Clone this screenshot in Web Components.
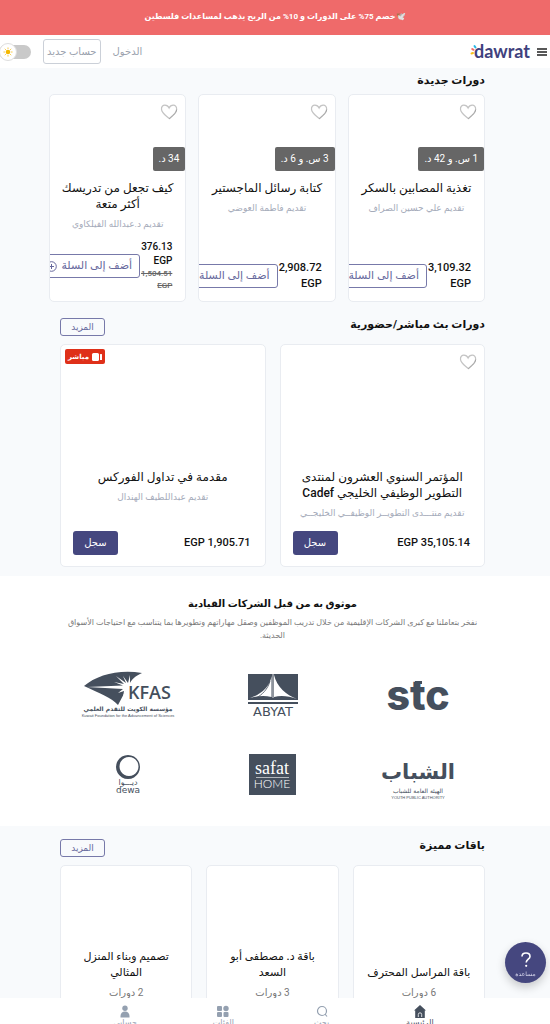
<!DOCTYPE html>
<html lang="ar" dir="rtl">
<head>
<meta charset="utf-8">
<meta name="viewport" content="width=device-width, initial-scale=1">
<title>dawrat</title>
<style>
  body {
    margin: 0;
    font-family: Roboto, "DejaVu Sans", sans-serif;
    font-size: 12px;
    line-height: 16px;
    color: #111;
    --brand: #45477f;
    --line: #e9ecf1;
    --slate: #454f5d;
    --muted: #a5abba;
  }
</style>
</head>
<body>
<dawrat-app></dawrat-app>

<script>
// small base class, every element just gives its template
class Base extends HTMLElement {
  constructor() {
    super();
    this.attachShadow({ mode: 'open' });
  }
  connectedCallback() {
    this.shadowRoot.innerHTML = `
      <style>
        :host { display: block; box-sizing: border-box; }
        *, *::before { box-sizing: border-box; }
        button { font: inherit; cursor: pointer; margin: 0; }
        a { color: inherit; text-decoration: none; }
        h2, h3, p { margin: 0; font-weight: inherit; font-size: inherit; }
        svg { display: block; flex: none; overflow: visible; }
      </style>${this.template()}`;
  }
}

// ---------- top ----------

class PromoBanner extends Base {
  template() {
    return `
    <style>
      :host { background: #ef6a6a; color: #fff; text-align: center; font-size: 8px; font-weight: 700; padding: 9px 12px 10px; }
    </style>
    <slot></slot>`;
  }
}
customElements.define('promo-banner', PromoBanner);

class ThemeSwitch extends Base {
  template() {
    return `
    <style>
      label { display: flex; align-items: center; width: 32px; height: 14px; border-radius: 7px; background: #c9c9c9; direction: ltr; }
      input { appearance: none; margin: 0; width: 0; height: 0; }
      .knob { display: grid; place-items: center; flex: none; width: 18px; height: 18px; border-radius: 50%; background: #fff; border: 1px solid #ddd; }
    </style>
    <label aria-label="الوضع الليلي">
      <input type="checkbox">
      <span class="knob">
        <svg width="10" height="10" viewBox="0 0 10 10"><circle cx="5" cy="5" r="2.3" fill="#f5b800"/><path d="M5 .5v1.4M5 8.1v1.4M.5 5h1.4M8.1 5h1.4M1.8 1.8l1 1M7.2 7.2l1 1M8.2 1.8l-1 1M2.8 7.2l-1 1" stroke="#f5b800" stroke-width=".8"/></svg>
      </span>
    </label>`;
  }
}
customElements.define('theme-switch', ThemeSwitch);

class DawratLogo extends Base {
  template() {
    return `
    <svg width="60" height="18" viewBox="0 0 60 18" direction="ltr" role="img" aria-label="dawrat">
      <path d="M4.500 3L5.500 4.500" stroke="#27b7e8" stroke-width="2" stroke-linecap="round"/>
      <path d="M2.200 6L3.500 6.800" stroke="#ef6a6a" stroke-width="2" stroke-linecap="round"/>
      <path d="M1.500 10.500L3 10" stroke="#f8c21c" stroke-width="2" stroke-linecap="round"/>
      <text x="4" y="15" font-family="Lato, sans-serif" font-size="18" font-weight="700" fill="#3f417d">dawrat</text>
    </svg>`;
  }
}
customElements.define('dawrat-logo', DawratLogo);

class SiteHeader extends Base {
  template() {
    return `
    <style>
      :host { display: flex; align-items: center; height: 33px; background: #fff; padding-right: 2px; color: #9aa1ad; font-size: 10px; }
      .menu { border: 0; background: none; padding: 0; margin-left: 6px; }
      nav { display: flex; align-items: center; gap: 12px; margin-right: auto; }
      .join { border: 1px solid #cbd0d8; border-radius: 3px; background: #fff; color: inherit; padding: 0 3px; height: 25px; }
      theme-switch { margin-left: -1px; }
    </style>
    <button class="menu" aria-label="القائمة"><svg width="12" height="10" viewBox="0 0 12 10"><path d="M1 2h10M1 5h10M1 8h10" stroke="#222" stroke-width="1.300"/></svg></button>
    <dawrat-logo></dawrat-logo>
    <nav>
      <a href="#login">الدخول</a>
      <button class="join">حساب جديد</button>
      <theme-switch></theme-switch>
    </nav>`;
  }
}
customElements.define('site-header', SiteHeader);

// ---------- sections ----------

class PageSection extends Base {
  template() {
    const more = this.hasAttribute('more') ? '<button>المزيد</button>' : '';
    return `
    <style>
      :host { padding: 0 65px 0 60px; }
      :host([wide]) { padding-left: 49px; }
      header { display: flex; align-items: center; justify-content: space-between; height: 26px; }
      :host([more]) header { align-items: flex-start; }
      h2 { font-size: 11px; font-weight: 700; line-height: 14px; }
      button { width: 45px; height: 18px; padding: 0; border: 1px solid #7779a9; border-radius: 3px; background: none; color: #66689c; font-size: 9px; line-height: 14px; }
      .grid { display: grid; grid-template-columns: repeat(var(--cols, 3), minmax(0, 1fr)); gap: var(--gap, 14px); }
    </style>
    <header><h2>${this.getAttribute('heading')}</h2>${more}</header>
    <div class="grid"><slot></slot></div>`;
  }
}
customElements.define('page-section', PageSection);

class HeartButton extends Base {
  template() {
    return `
    <style>button { border: 0; background: none; padding: 0; }</style>
    <button aria-label="المفضلة">
      <svg width="18" height="18" viewBox="0 0 18 18"><path d="M9.300 15.700C7 13.200 1.900 10.800 1.500 6.400 1.200 3.600 2.900 2.200 4.900 2.200c2 0 3.400 1.100 4.200 2.900C9.900 3.300 11.300 2.200 13.200 2.200c2.200 0 3.700 1.500 3.400 4.200-.4 4.400-5.100 6.800-7.300 9.300z" fill="#fff" stroke="#c4c4c4" stroke-width="1.200"/><path d="M9.300 15.900c2.200-2.500 7-5 7.400-9.300" fill="none" stroke="#999" stroke-width=".8"/></svg>
    </button>`;
  }
}
customElements.define('heart-button', HeartButton);

const cardCss = `
  :host { position: relative; display: flex; flex-direction: column; background: #fff; border: 1px solid var(--line); border-radius: 5px; overflow: hidden; }
  h3 { font-weight: 500; text-align: center; }
  .by { color: var(--muted); font-size: 9px; text-align: center; }
  heart-button { position: absolute; top: 8px; right: 7px; }
  .row { display: flex; align-items: center; margin-top: auto; }
  .price { font-size: 11px; font-weight: 500; }
`;

class CourseCard extends Base {
  template() {
    const old = this.getAttribute('old');
    return `
    <style>
      ${cardCss}
      .cover { display: flex; align-items: flex-end; height: 76px; margin-bottom: 9px; }
      .time { background: #666; color: #fff; font-size: 10px; line-height: 24px; padding: 0 6px; border-radius: 2px; }
      h3 { padding: 0 8px; }
      .by { margin-top: 4px; }
      .row { padding: 8px 13px 9px; }
      .sale { font-size: 10px; line-height: 14px; }
      del { display: block; color: #666; font-size: 8px; line-height: 12px; }
      .add { display: flex; align-items: center; gap: 4px; flex: none; height: 24px; padding: 0 7px; margin-right: 1px; border: 1px solid #7779a9; border-radius: 3px; background: #fff; color: #66689c; font-size: 11px; }
    </style>
    <div class="cover"><span class="time">${this.getAttribute('time')}</span></div>
    <heart-button></heart-button>
    <h3><slot></slot></h3>
    <p class="by">${this.getAttribute('by')}</p>
    <div class="row">
      <div class="price ${old ? 'sale' : ''}">${this.getAttribute('price')}${old ? `<del>${old}</del>` : ''}</div>
      <button class="add">أضف إلى السلة
        <svg width="11" height="11" viewBox="0 0 11 11"><circle cx="5.500" cy="5.500" r="4.800" fill="none" stroke="#66689c"/><path d="M5.500 3v5M3 5.500h5" stroke="#66689c"/></svg>
      </button>
    </div>`;
  }
}
customElements.define('course-card', CourseCard);

class LiveCard extends Base {
  template() {
    const top = this.hasAttribute('live')
      ? `<span class="live"><svg width="10" height="8" viewBox="0 0 10 8"><rect width="7" height="8" rx="1.500" fill="#fff"/><rect x="8" y="1" width="2" height="6" rx=".5" fill="#fff"/></svg>مباشر</span>`
      : '<heart-button></heart-button>';
    return `
    <style>
      ${cardCss}
      :host { min-height: 223px; padding: 124px 14px 11px; }
      .live { position: absolute; top: 4px; left: 4px; display: flex; align-items: center; gap: 3px; height: 15px; padding: 0 3px; border-radius: 2px; background: #df3019; color: #fff; font-size: 7px; font-weight: 700; }
      h3 { padding: 0 3px; }
      .by { margin-top: 4px; }
      .row { justify-content: space-between; }
      .row button { width: 45px; height: 24px; margin-left: -2px; padding: 0; border: 0; border-radius: 3px; background: var(--brand); color: #fff; font-size: 10px; }
    </style>
    ${top}
    <h3><slot></slot></h3>
    <p class="by">${this.getAttribute('by')}</p>
    <div class="row"><span class="price">${this.getAttribute('price')}</span><button>سجل</button></div>`;
  }
}
customElements.define('live-card', LiveCard);

class PackageCard extends Base {
  template() {
    return `
    <style>
      ${cardCss}
      :host { height: 180px; padding: 83px 8px 0; font-size: 11px; }
      .name { display: flex; align-items: flex-end; justify-content: center; height: 32px; }
      .count { color: #777; font-size: 10px; text-align: center; margin-top: 4px; }
    </style>
    <div class="name"><h3><slot></slot></h3></div>
    <p class="count">${this.getAttribute('count')}</p>`;
  }
}
customElements.define('package-card', PackageCard);

// ---------- partners ----------

const logos = {
  stc: `<svg width="70" height="44" viewBox="0 0 70 44">
      <text x="35" y="37" text-anchor="middle" font-family="Inter, sans-serif" font-weight="800" font-size="41" fill="#454f5d">stc</text>
      <path d="M32 11h7v-3h-7z" fill="#454f5d"/>
    </svg>`,
  abyat: `<svg width="54" height="44" viewBox="0 0 54 44">
      <rect x="2" y="1" width="50" height="26" fill="#454f5d"/>
      <path d="M25.500 3C24 14 14 22 4 25c7-2 14-3 21.500-1zM28 2c3 12 12 20 23 24-8-3-16-4-23-2z" fill="#fff"/>
      <path d="M27 1v24" stroke="#fff" stroke-width=".8"/>
      <path d="M24 8c-2 8-8 14-14 17" stroke="#454f5d" stroke-width=".8" fill="none"/>
      <path d="M2 30h50" stroke="#454f5d" stroke-width="2"/>
      <text x="27" y="43" text-anchor="middle" font-family="'DejaVu Sans', sans-serif" font-size="13" fill="#454f5d">ABYAT</text>
    </svg>`,
  kfas: `<svg width="104" height="50" viewBox="-7 0 104 50">
      <path d="M1 16C14 5 36-1 59 3c-7 3-11 7-13 12l-2 3-9 17C29 28 16 23 1 16z" fill="#454f5d"/>
      <path d="M4 17l36-1.500-9-3.500 10 2-8-8 10 7-3-7 5 7 2-8 0 9 7-6-5 7 4 1-6 2-4 3-3 6 1-6-6 2 5-4z" fill="#fff"/>
      <text x="45" y="29" font-family="'Open Sans', sans-serif" font-weight="600" font-size="18" fill="#454f5d">KFAS</text>
      <text x="45" y="41" text-anchor="middle" direction="rtl" font-family="'DejaVu Sans', sans-serif" font-weight="700" font-size="6" fill="#454f5d">مؤسسة الكويت للتقدم العلمي</text>
      <text x="45" y="47" text-anchor="middle" font-family="'Liberation Sans', sans-serif" font-size="4" fill="#454f5d">Kuwait Foundation for the Advancement of Sciences</text>
    </svg>`,
  youth: `<svg width="72" height="54" viewBox="0 0 72 54">
      <text x="36" y="31" text-anchor="middle" direction="rtl" font-family="'DejaVu Sans', sans-serif" font-weight="700" font-size="21" fill="#454f5d">الشباب</text>
      <text x="36" y="45" text-anchor="middle" direction="rtl" font-family="'DejaVu Sans', sans-serif" font-size="6" fill="#454f5d">الهيئة العامة للشباب</text>
      <text x="36" y="51" text-anchor="middle" font-family="'Liberation Sans', sans-serif" font-size="4" fill="#454f5d">YOUTH PUBLIC AUTHORITY</text>
    </svg>`,
  safat: `<svg width="48" height="42" viewBox="0 0 48 42">
      <rect width="47" height="41" fill="#454f5d"/>
      <g fill="#fff" text-anchor="middle">
        <text x="23" y="20" font-family="'Liberation Serif', serif" font-size="18">safat</text>
        <text x="23" y="34" font-family="Lato, sans-serif" font-weight="300" font-size="12">HOME</text>
      </g>
      <path d="M7 23.500h33" stroke="#fff" stroke-width=".6"/>
    </svg>`,
  dewa: `<svg width="34" height="42" viewBox="0 0 34 42">
      <path fill-rule="evenodd" d="M17 1a12 12 0 1 0 .01 0zM18 3a9.500 9.500 0 1 1-.01 0z" fill="#454f5d"/>
      <text x="17" y="31" text-anchor="middle" direction="rtl" font-family="'DejaVu Sans', sans-serif" font-size="8" fill="#454f5d">ديـــوا</text>
      <text x="17" y="39" text-anchor="middle" font-family="'DejaVu Sans', sans-serif" font-size="9" fill="#454f5d">dewa</text>
    </svg>`
};

class PartnerLogo extends Base {
  template() {
    return `<style>:host { display: grid; place-items: center; height: 80px; direction: ltr; }</style>${logos[this.getAttribute('name')]}`;
  }
}
customElements.define('partner-logo', PartnerLogo);

class TrustedBy extends Base {
  template() {
    return `
    <style>
      :host { background: #fff; text-align: center; padding: 20px 60px 11px 55px; }
      h2 { font-size: 10px; font-weight: 700; line-height: 16px; }
      p { color: #777; font-size: 8px; line-height: 13px; margin: 4px 0 13px; }
      .logos { display: grid; grid-template-columns: repeat(3, 1fr); }
    </style>
    <h2>موثوق به من قبل الشركات القيادية</h2>
    <p>نفخر بتعاملنا مع كبرى الشركات الإقليمية من خلال تدريب الموظفين وصقل مهاراتهم وتطويرها بما يتناسب مع احتياجات الأسواق الحديثة.</p>
    <div class="logos"><slot></slot></div>`;
  }
}
customElements.define('trusted-by', TrustedBy);

// ---------- bottom ----------

class BottomNav extends Base {
  template() {
    return `
    <style>
      :host { display: grid; grid-template-columns: repeat(4, 1fr); height: 26px; padding: 7px 81px 0 76px; overflow: hidden; background: #fff; color: #94a0b0; font-size: 8px; line-height: 10px; }
      a { display: flex; flex-direction: column; align-items: center; }
      .on { color: var(--slate); }
    </style>
    <a class="on" href="#home"><svg width="12" height="13" viewBox="0 0 12 13"><path d="M6 0l6 5.500h-1.200V13H1.200V5.500H0z" fill="currentColor"/><path d="M4.300 12V9.500a1.700 1.700 0 0 1 3.400 0V12" fill="none" stroke="#fff" stroke-width=".8"/></svg>الرئيسية</a>
    <a href="#search"><svg width="12" height="13" viewBox="0 0 12 13"><circle cx="6" cy="6" r="4.500" fill="none" stroke="currentColor" stroke-width="1.200"/><path d="M9 9l2 2.500" stroke="currentColor" stroke-width="1.200"/></svg>بحث</a>
    <a href="#cats"><svg width="12" height="13" viewBox="0 0 12 13" fill="currentColor"><rect y="1" width="5" height="5" rx="1"/><circle cx="9" cy="3.500" r="2.700"/><rect y="7" width="5" height="5" rx="1"/><rect x="6.500" y="7" width="5" height="5" rx="1"/></svg>الفئات</a>
    <a href="#me"><svg width="12" height="13" viewBox="0 0 12 13" fill="currentColor"><circle cx="6" cy="3.200" r="2.700"/><path d="M1.500 12.500V11c0-2.500 1.800-4.500 4.500-4.500s4.500 2 4.500 4.500v1.500z"/></svg>حسابي</a>`;
  }
}
customElements.define('bottom-nav', BottomNav);

class HelpButton extends Base {
  template() {
    return `
    <style>
      :host { position: fixed; right: 4px; bottom: 41px; }
      button { display: flex; flex-direction: column; align-items: center; gap: 2px; width: 41px; height: 41px; padding: 10px 0 0; border: 0; border-radius: 50%; background: var(--brand); color: #dcdcf0; font-size: 6px; line-height: 8px; box-shadow: 0 4px 10px rgba(0, 0, 0, .2); }
    </style>
    <button><svg width="10" height="16" viewBox="0 0 10 16"><path d="M1 4.500C1 2.300 2.800 1 5 1s4 1.300 4 3.400C9 7 5.200 7.300 5.200 10.500" fill="none" stroke="#fff" stroke-width="1.600"/><circle cx="5.200" cy="13.800" r="1.100" fill="#fff"/></svg>مساعدة</button>`;
  }
}
customElements.define('help-button', HelpButton);

// ---------- page ----------

class DawratApp extends Base {
  template() {
    return `
    <style>
      :host { display: flex; flex-direction: column; height: 100vh; background: #f8fafc; }
      main { flex: 1; min-height: 0; overflow: auto; scrollbar-width: none; }
      .live { --cols: 2; margin: 16px 0 9px; }
      .new { --gap: 12px; }
      .packs { margin-top: 13px; }
    </style>
    <main>
      <promo-banner>🕊️خصم 75% على الدورات و 10% من الربح يذهب لمساعدات فلسطين</promo-banner>
      <site-header></site-header>

      <page-section class="new" wide heading="دورات جديدة">
        <course-card time="1 س. و 42 د." by="تقديم علي حسين الصراف" price="3,109.32 EGP">تغذية المصابين بالسكر</course-card>
        <course-card time="3 س. و 6 د." by="تقديم فاطمة العوضي" price="2,908.72 EGP">كتابة رسائل الماجستير</course-card>
        <course-card time="34 د." by="تقديم د.عبدالله الفيلكاوي" price="376.13 EGP" old="1,504.51 EGP">كيف تجعل من تدريسك أكثر متعة</course-card>
      </page-section>

      <page-section class="live" more heading="دورات بث مباشر/حضورية">
        <live-card by="تقديم منتـــدى التطويــر الوظيفــي الخليجــي" price="35,105.14 EGP">المؤتمر السنوي العشرون لمنتدى التطوير الوظيفي الخليجي Cadef</live-card>
        <live-card live by="تقديم عبداللطيف الهندال" price="1,905.71 EGP">مقدمة في تداول الفوركس</live-card>
      </page-section>

      <trusted-by>
        <partner-logo name="stc"></partner-logo>
        <partner-logo name="abyat"></partner-logo>
        <partner-logo name="kfas"></partner-logo>
        <partner-logo name="youth"></partner-logo>
        <partner-logo name="safat"></partner-logo>
        <partner-logo name="dewa"></partner-logo>
      </trusted-by>

      <page-section class="packs" more heading="باقات مميزة">
        <package-card count="6 دورات">باقة المراسل المحترف</package-card>
        <package-card count="3 دورات">باقة د. مصطفى أبو السعد</package-card>
        <package-card count="2 دورات">تصميم وبناء المنزل المثالي</package-card>
      </page-section>
    </main>
    <bottom-nav></bottom-nav>
    <help-button></help-button>`;
  }
}
customElements.define('dawrat-app', DawratApp);
</script>
</body>
</html>
